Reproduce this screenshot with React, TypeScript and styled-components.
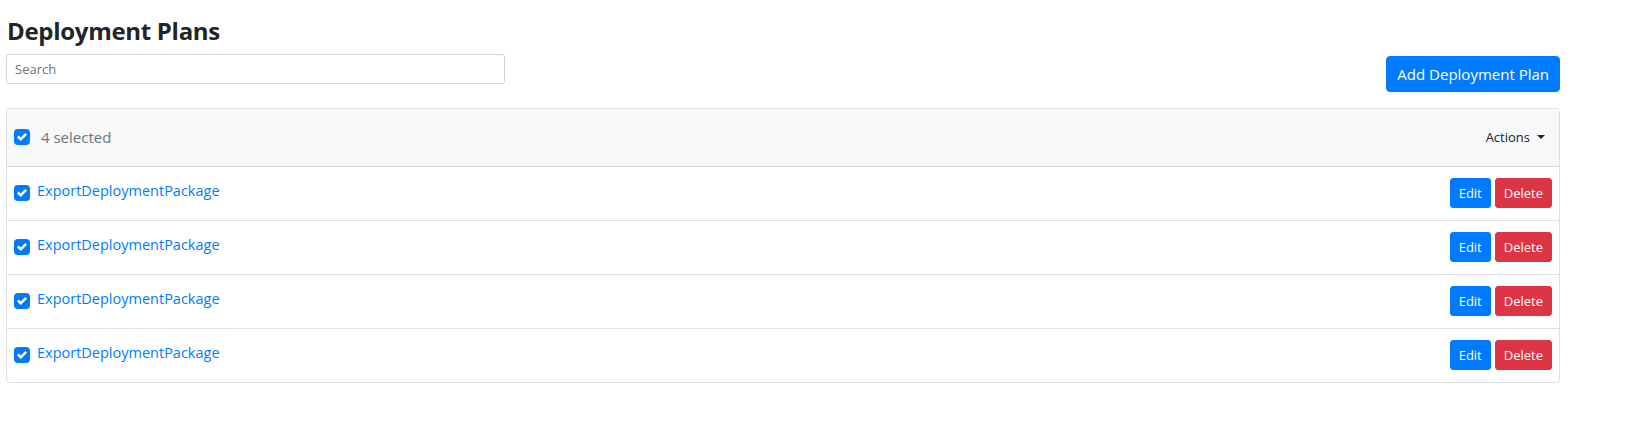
import React from 'react';
import styled, { createGlobalStyle } from 'styled-components';

const GlobalStyle = createGlobalStyle`
  body {
    margin: 0;
    background: #ffffff;
    font-family: "Open Sans", "Noto Sans", sans-serif;
    color: #212529;
  }
`;

const plans = [
  { id: 1, name: 'ExportDeploymentPackage' },
  { id: 2, name: 'ExportDeploymentPackage' },
  { id: 3, name: 'ExportDeploymentPackage' },
  { id: 4, name: 'ExportDeploymentPackage' },
];

const CheckBox: React.FC = () => (
  <StyledCheck>
    <svg width="10" height="10" viewBox="0 0 8 8">
      <path fill="#fff" d="M6.564.75l-3.59 3.612-1.538-1.55L0 4.26l2.974 2.99L8 2.193z" />
    </svg>
  </StyledCheck>
);

export default function App() {
  return (
    <>
      <GlobalStyle />
      <Page>
        <Title>Deployment Plans</Title>
        <Toolbar>
          <SearchInput placeholder="Search" />
          <PrimaryButton>Add Deployment Plan</PrimaryButton>
        </Toolbar>
        <Card>
          <CardHeader>
            <CheckBox />
            <SelectedText>4 selected</SelectedText>
            <ActionsToggle>
              Actions
              <Caret />
            </ActionsToggle>
          </CardHeader>
          {plans.map((plan) => (
            <PlanRow key={plan.id}>
              <CheckBox />
              <PlanLink href="#">{plan.name}</PlanLink>
              <RowButtons>
                <SmallButton $variant="primary">Edit</SmallButton>
                <SmallButton $variant="danger">Delete</SmallButton>
              </RowButtons>
            </PlanRow>
          ))}
        </Card>
      </Page>
    </>
  );
}

const Page = styled.div`
  width: 1554px;
  padding: 14px 0 0 6px;
`;

const Title = styled.h3`
  margin: 0 0 7px 1px;
  font-size: 24px;
  font-weight: 700;
  line-height: 1.4;
  letter-spacing: -0.3px;
  color: #212529;
`;

const Toolbar = styled.div`
  display: flex;
  justify-content: space-between;
  align-items: flex-start;
  margin-bottom: 16px;
`;

const SearchInput = styled.input`
  box-sizing: border-box;
  width: 499px;
  height: 30px;
  margin-top: -1px;
  padding: 4px 8px;
  font-family: inherit;
  font-size: 13px;
  color: #495057;
  border: 1px solid #ced4da;
  border-radius: 3px;
  outline: none;

  &::placeholder {
    color: #6c757d;
  }
`;

const PrimaryButton = styled.button`
  box-sizing: border-box;
  height: 36px;
  margin-top: 1px;
  padding: 0 10px;
  font-family: inherit;
  font-size: 15px;
  color: #ffffff;
  background: #007bff;
  border: 1px solid #007bff;
  border-radius: 4px;
`;

const Card = styled.div`
  border: 1px solid rgba(0, 0, 0, 0.125);
  border-radius: 4px;
  overflow: hidden;
`;

const CardHeader = styled.div`
  display: flex;
  align-items: center;
  height: 57px;
  padding: 0 14px 0 7px;
  background: #f7f8f9;
  border-bottom: 1px solid rgba(0, 0, 0, 0.125);
`;

const StyledCheck = styled.span`
  display: inline-flex;
  align-items: center;
  justify-content: center;
  flex: none;
  width: 16px;
  height: 16px;
  border-radius: 4px;
  background: #007bff;
`;

const SelectedText = styled.span`
  margin-left: 11px;
  font-size: 15px;
  color: #6c757d;
`;

const ActionsToggle = styled.span`
  display: flex;
  align-items: center;
  gap: 7px;
  margin-left: auto;
  font-size: 13px;
  color: #212529;
`;

const Caret = styled.span`
  width: 0;
  height: 0;
  border-left: 4px solid transparent;
  border-right: 4px solid transparent;
  border-top: 4.5px solid #212529;
`;

const PlanRow = styled.div`
  display: flex;
  align-items: center;
  height: 53px;
  padding: 0 7px;
  border-bottom: 1px solid rgba(0, 0, 0, 0.125);

  &:last-child {
    border-bottom: none;
  }
`;

const PlanLink = styled.a`
  margin-left: 7px;
  margin-top: -5px;
  font-size: 14.5px;
  color: #007bff;
  text-decoration: none;
`;

const RowButtons = styled.div`
  display: flex;
  gap: 4px;
  margin-left: auto;
`;

const SmallButton = styled.button<{ $variant: 'primary' | 'danger' }>`
  box-sizing: border-box;
  height: 30px;
  padding: 0 8px;
  font-family: inherit;
  font-size: 13px;
  color: #ffffff;
  background: ${({ $variant }) => ($variant === 'primary' ? '#007bff' : '#dc3545')};
  border: 1px solid ${({ $variant }) => ($variant === 'primary' ? '#007bff' : '#dc3545')};
  border-radius: 3px;
`;
